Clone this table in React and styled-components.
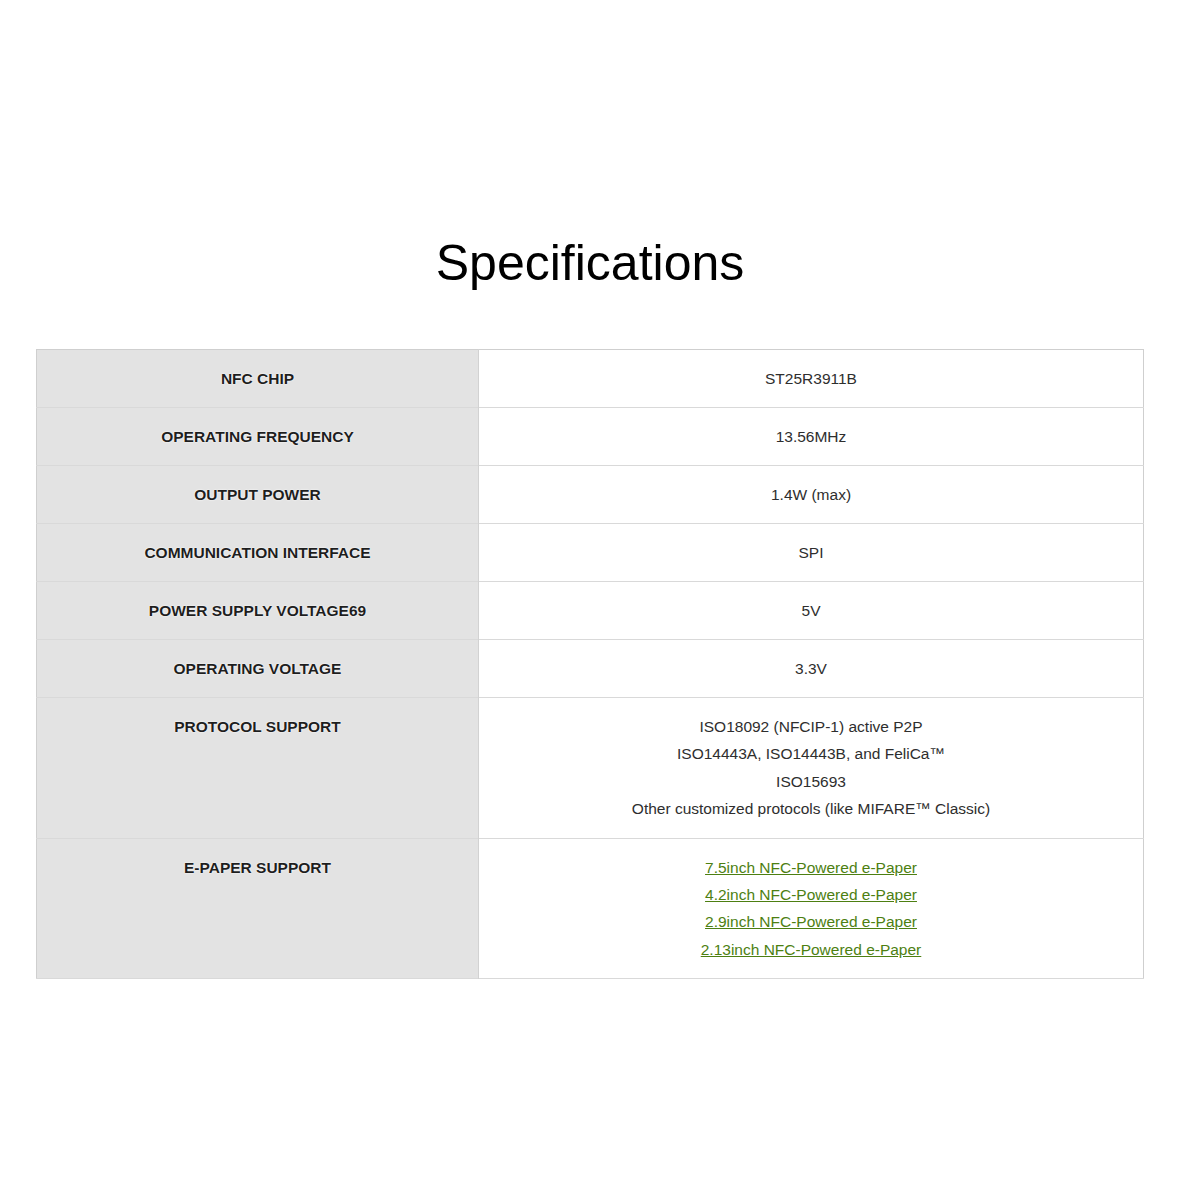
import styled, { createGlobalStyle } from 'styled-components'

const GlobalStyle = createGlobalStyle`
  body {
    margin: 0;
    background: #ffffff;
    font-family: "Liberation Sans", Arial, sans-serif;
  }
`

const Page = styled.div`
  width: 1180px;
  padding: 234px 36px 200px;
  box-sizing: border-box;
`

const Title = styled.h1`
  margin: 0 0 57px;
  font-size: 50px;
  line-height: 58px;
  font-weight: 400;
  color: #000000;
  text-align: center;
`

const Table = styled.table`
  width: 100%;
  table-layout: fixed;
  border-collapse: collapse;
  border: 1px solid #cfcfcf;
`

const Row = styled.tr`
  border-bottom: 1px solid #d9d9d9;
`

const Label = styled.th`
  box-sizing: border-box;
  width: 442px;
  background: #e3e3e3;
  border-right: 1px solid #d2d2d2;
  padding: 15px 10px;
  vertical-align: top;
  font-size: 15.5px;
  line-height: 27px;
  font-weight: 700;
  color: #1e1e1e;
  text-shadow: 0 0 2px #ffffff, 0 0 1px #ffffff;
  text-align: center;
`

const Value = styled.td`
  padding: 15px 10px;
  vertical-align: top;
  font-size: 15.5px;
  line-height: 27px;
  color: #2e2e2e;
  text-align: center;
  background: #ffffff;
`

const Line = styled.div`
  line-height: ${props => props.$tight ? '27.4px' : '27px'};
`

const Link = styled.a`
  color: #4d7f12;
  text-decoration: underline;
`

const specs = [
  { label: 'NFC CHIP', value: ['ST25R3911B'] },
  { label: 'OPERATING FREQUENCY', value: ['13.56MHz'] },
  { label: 'OUTPUT POWER', value: ['1.4W (max)'] },
  { label: 'COMMUNICATION INTERFACE', value: ['SPI'] },
  { label: 'POWER SUPPLY VOLTAGE69', value: ['5V'] },
  { label: 'OPERATING VOLTAGE', value: ['3.3V'] },
  {
    label: 'PROTOCOL SUPPORT',
    value: [
      'ISO18092 (NFCIP-1) active P2P',
      'ISO14443A, ISO14443B, and FeliCa™',
      'ISO15693',
      'Other customized protocols (like MIFARE™ Classic)',
    ],
  },
]

const papers = [
  '7.5inch NFC-Powered e-Paper',
  '4.2inch NFC-Powered e-Paper',
  '2.9inch NFC-Powered e-Paper',
  '2.13inch NFC-Powered e-Paper',
]

const App = () => (
  <Page>
    <GlobalStyle />
    <Title>Specifications</Title>
    <Table>
      <tbody>
        {specs.map(spec => (
          <Row key={spec.label}>
            <Label>{spec.label}</Label>
            <Value>
              {spec.value.map(v => (
                <Line key={v} $tight={spec.value.length > 1}>{v}</Line>
              ))}
            </Value>
          </Row>
        ))}
        <Row>
          <Label>E-PAPER SUPPORT</Label>
          <Value>
            {papers.map(p => (
              <Line key={p} $tight>
                <Link href="#">{p}</Link>
              </Line>
            ))}
          </Value>
        </Row>
      </tbody>
    </Table>
  </Page>
)

export default App
